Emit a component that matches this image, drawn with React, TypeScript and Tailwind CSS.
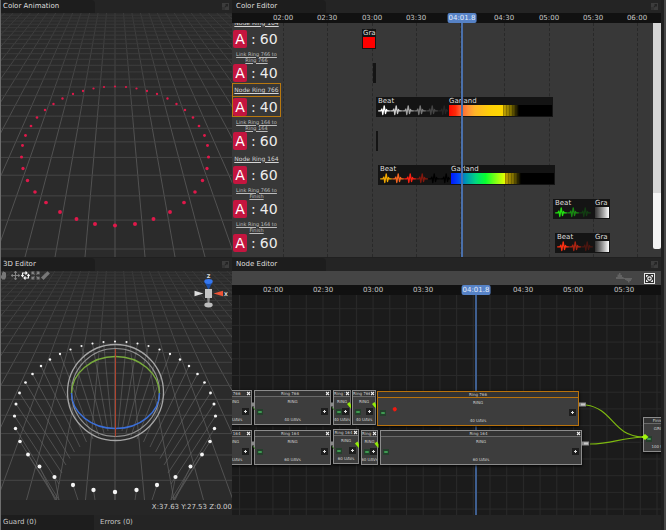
import React from "react";

type Point = [number, number];

/* ---------- shared chrome ---------- */

function PopOutIcon() {
  return (
    <svg viewBox="0 0 7 7" className="h-[7px] w-[7px]" aria-hidden="true">
      <rect width="7" height="7" fill="#3c3c3c" />
      <path d="M3 1h3v3L5 3 3.6 4.4 2.6 3.4 4 2z" fill="#242424" />
      <path d="M0 4h3v3H0z" fill="#333333" />
    </svg>
  );
}

function PanelHeader({ title, inset = "pl-[2px]" }: { title: string; inset?: string }) {
  return (
    <header className="flex h-[13px] shrink-0 items-center justify-between bg-[#242424] pr-[3px]">
      <h2 className={`flex h-full w-[94px] items-center rounded-tr-sm bg-[#1d1d1d] text-[7px] leading-none text-[#dedede] ${inset}`}>
        {title}
      </h2>
      <button type="button" aria-label={`Detach ${title}`}>
        <PopOutIcon />
      </button>
    </header>
  );
}

function Ruler({ ticks, playhead }: { ticks: [string, number][]; playhead: number }) {
  return (
    <div className="relative h-[10px] shrink-0 bg-[#111111] text-[7px] leading-[10px] text-[#c8c8c8]">
      {ticks.map(([label, x]) => (
        <span key={label} className="absolute top-0 -translate-x-1/2" style={{ left: x }}>
          {label}
        </span>
      ))}
      <span
        className="absolute top-0 z-10 -translate-x-1/2 rounded-xs bg-[#5682c6] px-px text-[#e4ecfa]"
        style={{ left: playhead }}
      >
        04:01.8
      </span>
    </div>
  );
}

/* ---------- perspective views ---------- */

function FloorGrid({ id, vanishY, height, spacing, near, step }: { id: string; vanishY: number; height: number; spacing: number; near: number; step: number }) {
  const columns = Array.from({ length: 33 }, (_, i) => i - 16);
  const rows = Array.from({ length: 26 }, (_, i) => i);
  const slope = spacing / (height - vanishY);
  return (
    <g fill="none" strokeWidth="1">
      <defs>
        <linearGradient id={id} x1="0" y1="0" x2="0" y2="1">
          <stop offset="0" stopColor="#2b2b2b" stopOpacity="0.6" />
          <stop offset="0.5" stopColor="#2b2b2b" stopOpacity="0" />
        </linearGradient>
      </defs>
      {columns.map((n) => (
        <line
          key={n}
          x1={115 + n * slope * (0 - vanishY)}
          y1="0"
          x2={115 + n * spacing}
          y2={height}
          stroke="#525252"
        />
      ))}
      {rows.map((k) => {
        const y = vanishY + 1 / (near + step * k);
        return <line key={k} x1="0" x2="232" y1={y} y2={y} stroke="#464646" />;
      })}
      <rect width="232" height={height} fill={`url(#${id})`} />
    </g>
  );
}

function mirror(points: Point[]): Point[] {
  return points.concat(points.filter(([x]) => x < 115).map(([x, y]) => [230 - x, y] as Point));
}

const showRing: Point[] = [
  [115, 73.5], [104, 74], [93.5, 75.5], [83, 78], [73, 81], [62.5, 85.5], [53.5, 91], [45, 97], [37, 104.5], [31, 113],
  [25.5, 122.5], [22.5, 132.5], [21.5, 144], [23, 155.5], [27.5, 167.5], [35, 179], [46, 189.5], [60, 199], [76.5, 206], [95, 211], [115, 212.5],
];

const droneTrails: [number, number, number, number][] = [
  [115, 70.5, 115, 157], [103.5, 71, 112, 158], [92.5, 72.5, 108, 160], [81.5, 75, 104, 162], [70.5, 78.5, 99, 165],
  [60, 83, 93, 168], [50, 88.5, 86.5, 171], [41, 95, 80, 176], [32.5, 103, 74.5, 181], [25.5, 111.5, 70, 187.5],
  [19.5, 122, 66, 194], [16, 133, 62, 202], [14.5, 145, 59, 213], [15.5, 157.5, 59, 229], [20, 170.5, 57, 229],
  [28, 183.5, 56, 229], [39.5, 195.5, 55, 229], [54.5, 206, 59, 229], [73, 214, 78, 229], [93.5, 219, 95, 229], [115, 221, 115, 229],
];

function ColorAnimation() {
  return (
    <section className="flex min-h-0 flex-col border-l border-[#6e6e6e]">
      <PanelHeader title="Color Animation" />
      <svg viewBox="1 0 231 244" preserveAspectRatio="xMidYMid slice" className="min-h-0 w-full flex-1 bg-[#2b2b2b]">
        <FloorGrid id="show-fade" vanishY={-96} height={244} spacing={30} near={0.003012} step={0.000287} />
        {mirror(showRing).map(([x, y]) => (
          <circle key={`${x}-${y}`} cx={x} cy={y} r={1.1 + (y - 73) * 0.0065} fill="#e0184a" />
        ))}
      </svg>
    </section>
  );
}

const toolIcons: { name: string; color: string; d: string; filled?: boolean }[] = [
  { name: "Pan", color: "#777777", filled: true, d: "M0 4l1 .8V1.4h1v-1h1v.6h1v.6h1V6L4 8.500H1.500L0 7z" },
  { name: "Move", color: "#858585", d: "M4.500 0.500v8M0.500 4.500h8M3.300 1.700 4.500.5l1.200 1.200M3.300 7.300l1.200 1.200 1.200-1.200M1.700 3.300.5 4.500l1.200 1.200M7.300 3.300l1.200 1.200-1.200 1.200" },
  { name: "Rotate", color: "#f4f4f4", d: "M1.500 5.500V2H6M4.500.5 6 2 4.500 3.500M7.500 3.500V7H3M4.500 5.500 3 7 4.500 8.500M.3 4l1.200 1.500L2.700 4M6.300 5l1.200-1.500L8.700 5" },
  { name: "Scale", color: "#858585", d: "M1 3.500V1h2.500M5.500 1H8v2.500M1 5.500V8h2.500M5.500 8H8V5.500M1 1l2.500 2.500M8 1 5.500 3.500M1 8l2.500-2.500M8 8 5.500 5.500" },
  { name: "Measure", color: "#777777", filled: true, d: "M0 6.500 6.500.3 8.900 2.600 2.500 9z" },
];

function AxisGizmo() {
  return (
    <g>
      <path d="M207 26h3l-.8 8h-1.400z" fill="#8d8d8d" />
      <ellipse cx="208.500" cy="34" rx="4.200" ry="2.400" fill="#bdbdbd" />
      <path d="M204.500 11h8l-4 8z" fill="#1b4ea8" />
      <ellipse cx="208.500" cy="10.500" rx="4.200" ry="2.400" fill="#3577f0" />
      <path d="M194.500 19.800v5.400l9-2.700z" fill="#dedede" />
      <path d="M223 19.800v5.400l-9.500-2.700z" fill="#f05335" />
      <rect x="205" y="18" width="7" height="9" fill="#c6c6c6" />
      <g fontFamily="DejaVu Sans, sans-serif" fontWeight="700" fontSize="5" textAnchor="middle" fill="#dcdcdc">
        <text x="208.500" y="7">Z</text>
        <text x="226" y="24.500">X</text>
      </g>
    </g>
  );
}

function Editor3D() {
  const trails = droneTrails.concat(
    droneTrails.slice(1, 20).map(([a, b, c, d]) => [230 - a, b, 230 - c, d] as [number, number, number, number]),
  );
  return (
    <section className="flex min-h-0 flex-col border-l border-[#6e6e6e] pt-px">
      <PanelHeader title="3D Editor" />
      <div className="relative flex min-h-0 flex-1 flex-col bg-[#2b2b2b]">
        <svg viewBox="1 0 231 229" preserveAspectRatio="xMidYMid slice" className="min-h-0 w-full flex-1">
          <FloorGrid id="editor-fade" vanishY={-94} height={229} spacing={29.5} near={0.003297} step={0.0003} />
          <g stroke="#686868" strokeWidth="0.8" opacity="0.75">
            {trails.map(([a, b, c, d], i) => (
              <line key={i} x1={a} y1={b} x2={c} y2={d} />
            ))}
          </g>
          <g fill="none">
            <circle cx="115.500" cy="121.500" r="48" stroke="#a6a6a6" strokeWidth="1.300" />
            <circle cx="115.500" cy="121.500" r="44" stroke="#909090" strokeWidth="1.100" />
            <path d="M71.500 123A44 37.500 0 0 1 159.500 123" stroke="#78aa3c" strokeWidth="1.400" />
            <path d="M71.500 122A44 35.500 0 0 0 159.500 122" stroke="#3b6fd8" strokeWidth="1.400" />
            <path d="M115.500 78V165.500" stroke="#b0442f" strokeWidth="1.100" />
          </g>
          {mirror(droneTrails.map(([x, y]) => [x, y] as Point)).map(([x, y]) => (
            <circle key={`${x}-${y}`} cx={x} cy={y} r={1.05 + (y - 70) * 0.0075} fill="#f5f5f5" />
          ))}
          <AxisGizmo />
        </svg>
        <div className="absolute top-0 left-0 flex">
          {toolIcons.map((tool) => (
            <button key={tool.name} type="button" aria-label={tool.name} className="w-[10px]">
              <svg viewBox="0 0 9 9" className="h-[9px] w-[9px]">
                <path d={tool.d} fill={tool.filled ? tool.color : "none"} stroke={tool.filled ? "none" : tool.color} strokeWidth="1.100" />
              </svg>
            </button>
          ))}
        </div>
        <output className="flex h-[15px] shrink-0 items-center justify-end bg-[#262626] text-[7px] leading-none whitespace-nowrap text-[#cfcfcf]">
          X:37.63 Y:27.53 Z:0.00
        </output>
      </div>
    </section>
  );
}

/* ---------- colour timeline ---------- */

type Clip = {
  x: number;
  width: number;
  labels?: string[];
  beats?: string[];
  beatWidth?: number;
  fill?: string;
};

type Track = { name: string; value: number; selected?: boolean; clip: Clip };

const fireFill =
  "bg-[linear-gradient(90deg,#ff0a00_0%,#ff2a08_12%,#ff5a30_20%,#ff9238_36%,#ffb428_48%,#ffcf08_75%,#ffd800_100%)]";
const rainbowFill =
  "bg-[linear-gradient(90deg,#0018ff_0%,#0048f8_14%,#0090b8_26%,#00d880_46%,#08ff30_64%,#70ff18_80%,#e8ff00_100%)]";

const tracks: Track[] = [
  { name: "Node Ring 164", value: 60, clip: { x: 130, width: 14, labels: ["Gra"], fill: "bg-[#ff0000]" } },
  { name: "Link Ring 766 to Ring 766", value: 40, clip: { x: 141, width: 3 } },
  {
    name: "Node Ring 766", value: 40, selected: true,
    clip: { x: 144, width: 177, labels: ["Beat", "Garland"], beats: ["#ffffff", "#cccccc", "#a2a2a2", "#777777", "#444444", "#262626"], beatWidth: 72, fill: fireFill },
  },
  { name: "Link Ring 164 to Ring 164", value: 60, clip: { x: 144, width: 2 } },
  {
    name: "Node Ring 164", value: 60,
    clip: { x: 146, width: 177, labels: ["Beat", "Garland"], beats: ["#f0a800", "#f56420", "#fa2012", "#80180e", "#000000", "#000000"], beatWidth: 72, fill: rainbowFill },
  },
  {
    name: "Link Ring 766 to Finish", value: 40,
    clip: { x: 321, width: 57, labels: ["Beat", "Gra"], beats: ["#22e010", "#188812", "#123c12"], beatWidth: 41, fill: "bg-linear-to-r from-[#333333] to-white" },
  },
  {
    name: "Link Ring 164 to Finish", value: 60,
    clip: { x: 323, width: 55, labels: ["Beat", "Gra"], beats: ["#fa3012", "#a82412", "#4a1610"], beatWidth: 39, fill: "bg-linear-to-r from-[#333333] to-white" },
  },
];

function BeatGlyph({ color }: { color: string }) {
  return (
    <svg viewBox="0 0 12 11" className="h-[11px] w-[12px] shrink-0" aria-hidden="true">
      <path d="M.2 5.800H2.800L3.900 4 4.800 9.500 6.200 .8 7.500 8.500 8.500 4.500 9.300 5.800H11.800" fill="none" stroke={color} strokeWidth="1.300" strokeLinejoin="round" />
    </svg>
  );
}

function ClipView({ clip }: { clip: Clip }) {
  const labelled = (clip.labels?.length ?? 0) > 0;
  const garland = clip.labels?.includes("Garland");
  return (
    <div className="absolute bottom-0 flex h-5 bg-[#141414]" style={{ left: clip.x, width: clip.width }}>
      {clip.beats && (
        <div className="shrink-0 pl-[2px]" style={{ width: clip.beatWidth }}>
          <span className="block h-2 text-[7px] leading-[8px] text-[#dddddd]">Beat</span>
          <div className="flex overflow-hidden">
            {clip.beats.map((c, i) => (
              <BeatGlyph key={i} color={c} />
            ))}
          </div>
        </div>
      )}
      {labelled && (
        <div className="flex min-w-0 flex-1 flex-col px-px pb-px">
          <span className="h-2 text-[7px] leading-[8px] text-[#dddddd]">{garland ? "Garland" : "Gra"}</span>
          <div className="flex flex-1 bg-black">
            <div className={`h-full ${clip.fill} ${garland ? "w-[54px]" : "w-full"}`} />
            {garland && (
              <div className="h-full w-4 bg-[repeating-linear-gradient(90deg,#00000033_0px,#00000033_1px,transparent_1px,transparent_3px),linear-gradient(90deg,#c8a800,#807000_50%,#000000)]" />
            )}
          </div>
        </div>
      )}
    </div>
  );
}

const colorTicks: [string, number][] = [
  ["02:00", 51], ["02:30", 95], ["03:00", 140], ["03:30", 184], ["04:30", 272], ["05:00", 317], ["05:30", 361], ["06:00", 405],
];

function ColorEditor() {
  return (
    <section className="flex min-h-0 min-w-0 flex-col">
      <PanelHeader title="Color Editor" inset="pl-1" />
      <Ruler ticks={colorTicks} playhead={230} />
      <div className="relative flex min-h-0 flex-1 overflow-hidden bg-[#383838]">
        {[...colorTicks.map(([, x]) => x), 228].map((x) => (
          <div key={x} className="absolute inset-y-0 border-l border-dashed border-[#292929]" style={{ left: x }} />
        ))}
        <div className="relative flex min-w-0 flex-1 flex-col justify-end pb-1">
          {tracks.map((track, i) => (
            <div key={i} className="relative flex h-[34px] shrink-0">
              <div
                className={`flex w-[49px] flex-col justify-between border ${track.selected ? "border-[#b8780f]" : "border-transparent"}`}
              >
                <span
                  className={`flex h-[13px] items-center justify-center text-center whitespace-pre-line underline ${
                    track.name.startsWith("Node") ? "text-[6px] leading-[6px] text-[#d6d6d6]" : "text-[5px] leading-[6px] text-[#bdbdbd]"
                  } ${track.selected ? "border-b border-[#b8780f]" : ""}`}
                >
                  {track.name.replace(" to ", " to\n")}
                </span>
                <div className="flex items-center gap-1 text-[14px] leading-[18px] text-[#ececec]">
                  <button type="button" aria-label={`Color A of ${track.name}`} className="h-[18px] w-[14px] rounded-xs bg-[#c4153f] text-white">
                    A
                  </button>
                  <span className="whitespace-nowrap">
                    :<span className="pl-1">{track.value}</span>
                  </span>
                </div>
              </div>
              <ClipView clip={track.clip} />
            </div>
          ))}
        </div>
        <div className="absolute inset-y-0 w-[2px] bg-[#4a70ab]" style={{ left: 229 }} />
        <div className="flex w-2 shrink-0 flex-col items-stretch pb-2">
          <div className="flex-1 bg-[#d6d6d6]" />
          <div className="h-[56px] rounded-b-xs bg-[#f4f4f4]" />
        </div>
      </div>
    </section>
  );
}

/* ---------- node graph ---------- */

type GraphNode = {
  x: number;
  y: number;
  width: number;
  title: string;
  kind?: string;
  count: string;
  selected?: boolean;
};

const nodes: GraphNode[] = [
  { x: -16, y: 95, width: 36, title: "Ring 766", count: "40 UAVs" },
  { x: 22, y: 95, width: 77, title: "Ring 766", count: "40 UAVs" },
  { x: 101, y: 95, width: 18, title: "Ring 766", count: "40 UAVs" },
  { x: 120, y: 95, width: 24, title: "Ring 766", count: "40 UAVs" },
  { x: 145, y: 96, width: 202, title: "Ring 766", count: "40 UAVs", selected: true },
  { x: -16, y: 135, width: 36, title: "Ring 164", count: "60 UAVs" },
  { x: 22, y: 135, width: 77, title: "Ring 164", count: "60 UAVs" },
  { x: 101, y: 134, width: 26, title: "Ring 164", count: "60 UAVs" },
  { x: 129, y: 135, width: 17, title: "Ring 164", count: "60 UAVs" },
  { x: 148, y: 135, width: 202, title: "Ring 164", count: "60 UAVs" },
  { x: 411, y: 122, width: 36, title: "Finish", kind: "GROUP", count: "100 UAVs" },
];

function NodeCard({ node }: { node: GraphNode }) {
  const edge = node.selected ? "border-[#b8720c]" : "border-[#8c8c8c]";
  return (
    <article
      className={`absolute flex h-[35px] flex-col overflow-hidden border bg-[#3d3d3d] text-center text-[4px] leading-[5px] whitespace-nowrap text-[#d2d2d2] shadow-[0_1px_3px_#000] ${edge}`}
      style={{ left: node.x, top: node.y, width: node.width }}
    >
      <div className={`flex h-[6px] shrink-0 border-b bg-[#333333] ${node.selected ? "border-[#b8720c]" : "border-[#6a6a6a]"}`}>
        <span className="min-w-0 flex-1 overflow-hidden">{node.title}</span>
        {!node.selected && (
          <button type="button" aria-label={`Remove ${node.title}`} className="flex w-[5px] items-center justify-center bg-[#2a2a2a]">
            <svg viewBox="0 0 5 5" className="h-[5px] w-[5px]">
              <path d="M1 1l3 3M4 1 1 4" stroke="#ededed" strokeWidth="1.100" />
            </svg>
          </button>
        )}
      </div>
      <span className="mt-[2px] block">{node.kind ?? "RING"}</span>
      <div className="mt-1 flex h-[7px] shrink-0 items-center justify-between px-[2px]">
        <span className="flex h-[6px] w-[6px] shrink-0 items-center justify-center bg-[#25402c]">
          <span className="h-[2px] w-1 rounded-full bg-[#3f9a52]" />
        </span>
        <button type="button" aria-label={`Extend ${node.title}`} className="flex h-[7px] w-[7px] shrink-0 items-center justify-center bg-[#1e1e1e]">
          <svg viewBox="0 0 5 5" className="h-[5px] w-[5px]">
            <path d="M2.500 1v3M1 2.500h3" stroke="#dddddd" />
          </svg>
        </button>
      </div>
      <span className="mt-auto mb-[2px] block self-center">{node.count}</span>
    </article>
  );
}

function Wires() {
  const ports: Point[] = [[20, 108], [99, 108], [20, 147], [99, 147], [347, 108], [350, 147]];
  const joins: Point[] = [[117.5, 110], [142.5, 110], [125.5, 149.5], [145, 149.5]];
  return (
    <svg viewBox="0 0 429 220" className="pointer-events-none absolute top-0 left-0 h-[220px] w-[429px]" aria-hidden="true">
      {ports.map(([x, y], i) => (
        <g key={`${x}-${y}`}>
          <rect x={x} y={y - 0.5} width={i < 4 ? 3 : 7} height="4" fill="#8a8a8a" />
          {i < 4 ? (
            <path d={`M${x + 1} ${y + 4}l2 3`} stroke="#3f7d2c" />
          ) : (
            <rect x={x + 2} y={y + 0.5} width="4" height="2" fill="#c9c9c9" />
          )}
        </g>
      ))}
      <g fill="none" stroke="#7db80f" strokeWidth="1.200">
        <path d="M354 110C382 114 380 141 411 142" />
        <path d="M358 149C380 149 388 143 411 142" />
      </g>
      {joins.map(([x, y]) => (
        <path key={x} d={`M${x - 2.5} ${y - 1}l2.500-2 1.500 2.500v4l-2-2z`} fill="#93ea08" />
      ))}
      <path d="M409.500 142l3.500-3 3.500 3-3.500 3z" fill="#a2f60c" />
      <path d="M160.500 114l1-1.500 2-.500 1.500 2-1 2-2 .5z" fill="#f01a10" />
    </svg>
  );
}

const nodeTicks: [string, number][] = [
  ["02:00", 41], ["02:30", 91], ["03:00", 141], ["03:30", 191], ["04:30", 291], ["05:00", 341], ["05:30", 392],
];

function GraphBackdrop() {
  return (
    <svg className="absolute inset-0 h-full w-full" aria-hidden="true">
      <defs>
        <pattern id="graph-grid" width="16.700" height="16.700" x="7" y="-3.500" patternUnits="userSpaceOnUse">
          <path d="M.5 0V16.700M0 .5H16.700" stroke="#292929" />
        </pattern>
      </defs>
      <rect width="100%" height="100%" fill="url(#graph-grid)" />
    </svg>
  );
}

function NodeEditor() {
  return (
    <section className="flex min-h-0 min-w-0 flex-col pt-px">
      <PanelHeader title="Node Editor" inset="pl-1" />
      <div className="flex h-[14px] shrink-0 items-center justify-end gap-3 bg-[#454545] pr-[6px]">
        <button type="button" aria-label="Waveform">
          <svg viewBox="0 0 16 10" className="h-[10px] w-4">
            <path d="M0 6V4h1.500V1.500H3V0h1.500v2H6v2h1.500v1H16v1.500h-1V8h-1.500v1.500H12V8h-1.500V7H9V6z" fill="#626262" />
          </svg>
        </button>
        <button type="button" aria-label="Fit graph to view">
          <svg viewBox="0 0 11 11" className="h-[11px] w-[11px]">
            <rect x=".5" y=".5" width="10" height="10" fill="#2c2c2c" stroke="#e6e6e6" />
            <path d="M2 4.500V2h2.500zM6.500 2H9v2.500zM2 6.500V9h2.500zM9 6.500V9H6.500z" fill="#f2f2f2" />
            <circle cx="5.500" cy="5.500" r="1.700" fill="none" stroke="#f2f2f2" strokeWidth="1.200" />
          </svg>
        </button>
      </div>
      <Ruler ticks={nodeTicks} playhead={244} />
      <div className="relative min-h-0 flex-1 overflow-hidden bg-[#1b1b1b]">
        <GraphBackdrop />
        <div className="absolute inset-y-0 w-[2px] bg-[#3f5f90]" style={{ left: 243 }} />
        {nodes.map((node) => (
          <NodeCard key={`${node.x}-${node.y}`} node={node} />
        ))}
        <Wires />
      </div>
    </section>
  );
}

/* ---------- page ---------- */

export default function App() {
  return (
    <main className="grid h-screen grid-cols-[232px_minmax(0,1fr)] grid-rows-[257px_minmax(0,1fr)_15px] overflow-hidden border-r-2 border-[#464646] bg-[#202020] pr-[3px] font-['DejaVu_Sans',sans-serif]">
      <ColorAnimation />
      <ColorEditor />
      <Editor3D />
      <NodeEditor />
      <footer className="col-span-2 flex items-center border-l border-[#6e6e6e] bg-[#242424] text-[7px] leading-none text-[#c6c6c6]">
        <span className="flex h-full w-[93px] items-center bg-[#1d1d1d] pl-[2px]">Guard (0)</span>
        <span className="pl-[6px]">Errors (0)</span>
      </footer>
    </main>
  );
}
